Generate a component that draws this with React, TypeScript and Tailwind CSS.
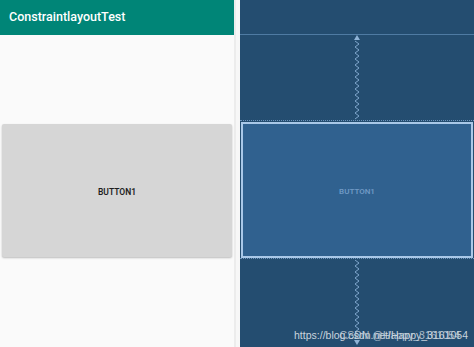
import React from 'react';

// Zig-zag "spring" that Android Studio draws for a constraint margin.
function Spring({ height, arrow }: { height: number; arrow: 'up' | 'down' }) {
  const pts: string[] = [];
  const start = arrow === 'up' ? 6 : 0;
  const end = arrow === 'up' ? height : height - 6;
  let left = true;
  for (let y = start; y <= end; y += 3) {
    pts.push(`${left ? 2 : 6},${y}`);
    left = !left;
  }
  return (
    <svg width="8" height={height} viewBox={`0 0 8 ${height}`} className="block">
      <polyline points={pts.join(' ')} fill="none" stroke="#7fa6cc" strokeWidth="1" />
      {arrow === 'up' ? (
        <polygon points="4,0 1,5 7,5" fill="#8fb3d6" />
      ) : (
        <polygon points={`4,${height} 1,${height - 5} 7,${height - 5}`} fill="#8fb3d6" />
      )}
    </svg>
  );
}

function DottedLine() {
  return <div className="h-[2px] w-full border-t border-dotted border-[#6e95bd]" />;
}

export default function App() {
  return (
    <div className="flex h-[347px] w-[474px] overflow-hidden font-['Roboto','Liberation_Sans',sans-serif]">
      {/* device preview */}
      <div className="flex w-[234px] flex-col bg-[#fafafa]">
        <div className="flex h-[35px] items-center bg-[#008577] pl-[9px] text-[12.5px] font-medium text-white">
          ConstraintlayoutTest
        </div>
        <div className="mx-[2px] mt-[89px] flex h-[133px] items-center justify-center rounded-[2px] bg-[#d6d6d6] pt-[3px] text-[8.5px] font-semibold text-[#1f1f1f] shadow-[0_1px_2px_rgba(0,0,0,0.25)]">
          BUTTON1
        </div>
      </div>

      <div className="w-[6px] border-l-2 border-[#ececec] bg-[#f7f7f7]" />

      {/* blueprint */}
      <div className="relative flex flex-1 flex-col bg-[#244d70]">
        <div className="h-[35px] border-b border-[#4f7ba3]" />
        <div className="flex h-[85px] justify-center">
          <Spring height={85} arrow="up" />
        </div>
        <DottedLine />
        <div className="mx-[1px] flex h-[136px] items-center justify-center border-2 border-[#a9c8e8] bg-[#30618f] pt-[3px] text-[8px] font-semibold text-[#6f99c4]">
          BUTTON1
        </div>
        <DottedLine />
        <div className="flex flex-1 justify-center">
          <Spring height={85} arrow="down" />
        </div>

        <div className="absolute bottom-[6px] right-[6px] text-[10.5px] leading-none text-[#c9d4de]">
          <span className="font-['Liberation_Sans',sans-serif]">https://blog.csdn.net/Happy_3161054</span>
          <span className="absolute right-[8px] top-0 font-['Liberation_Sans',sans-serif] opacity-80">
            CSDN @Happy_3161054
          </span>
        </div>
      </div>
    </div>
  );
}
